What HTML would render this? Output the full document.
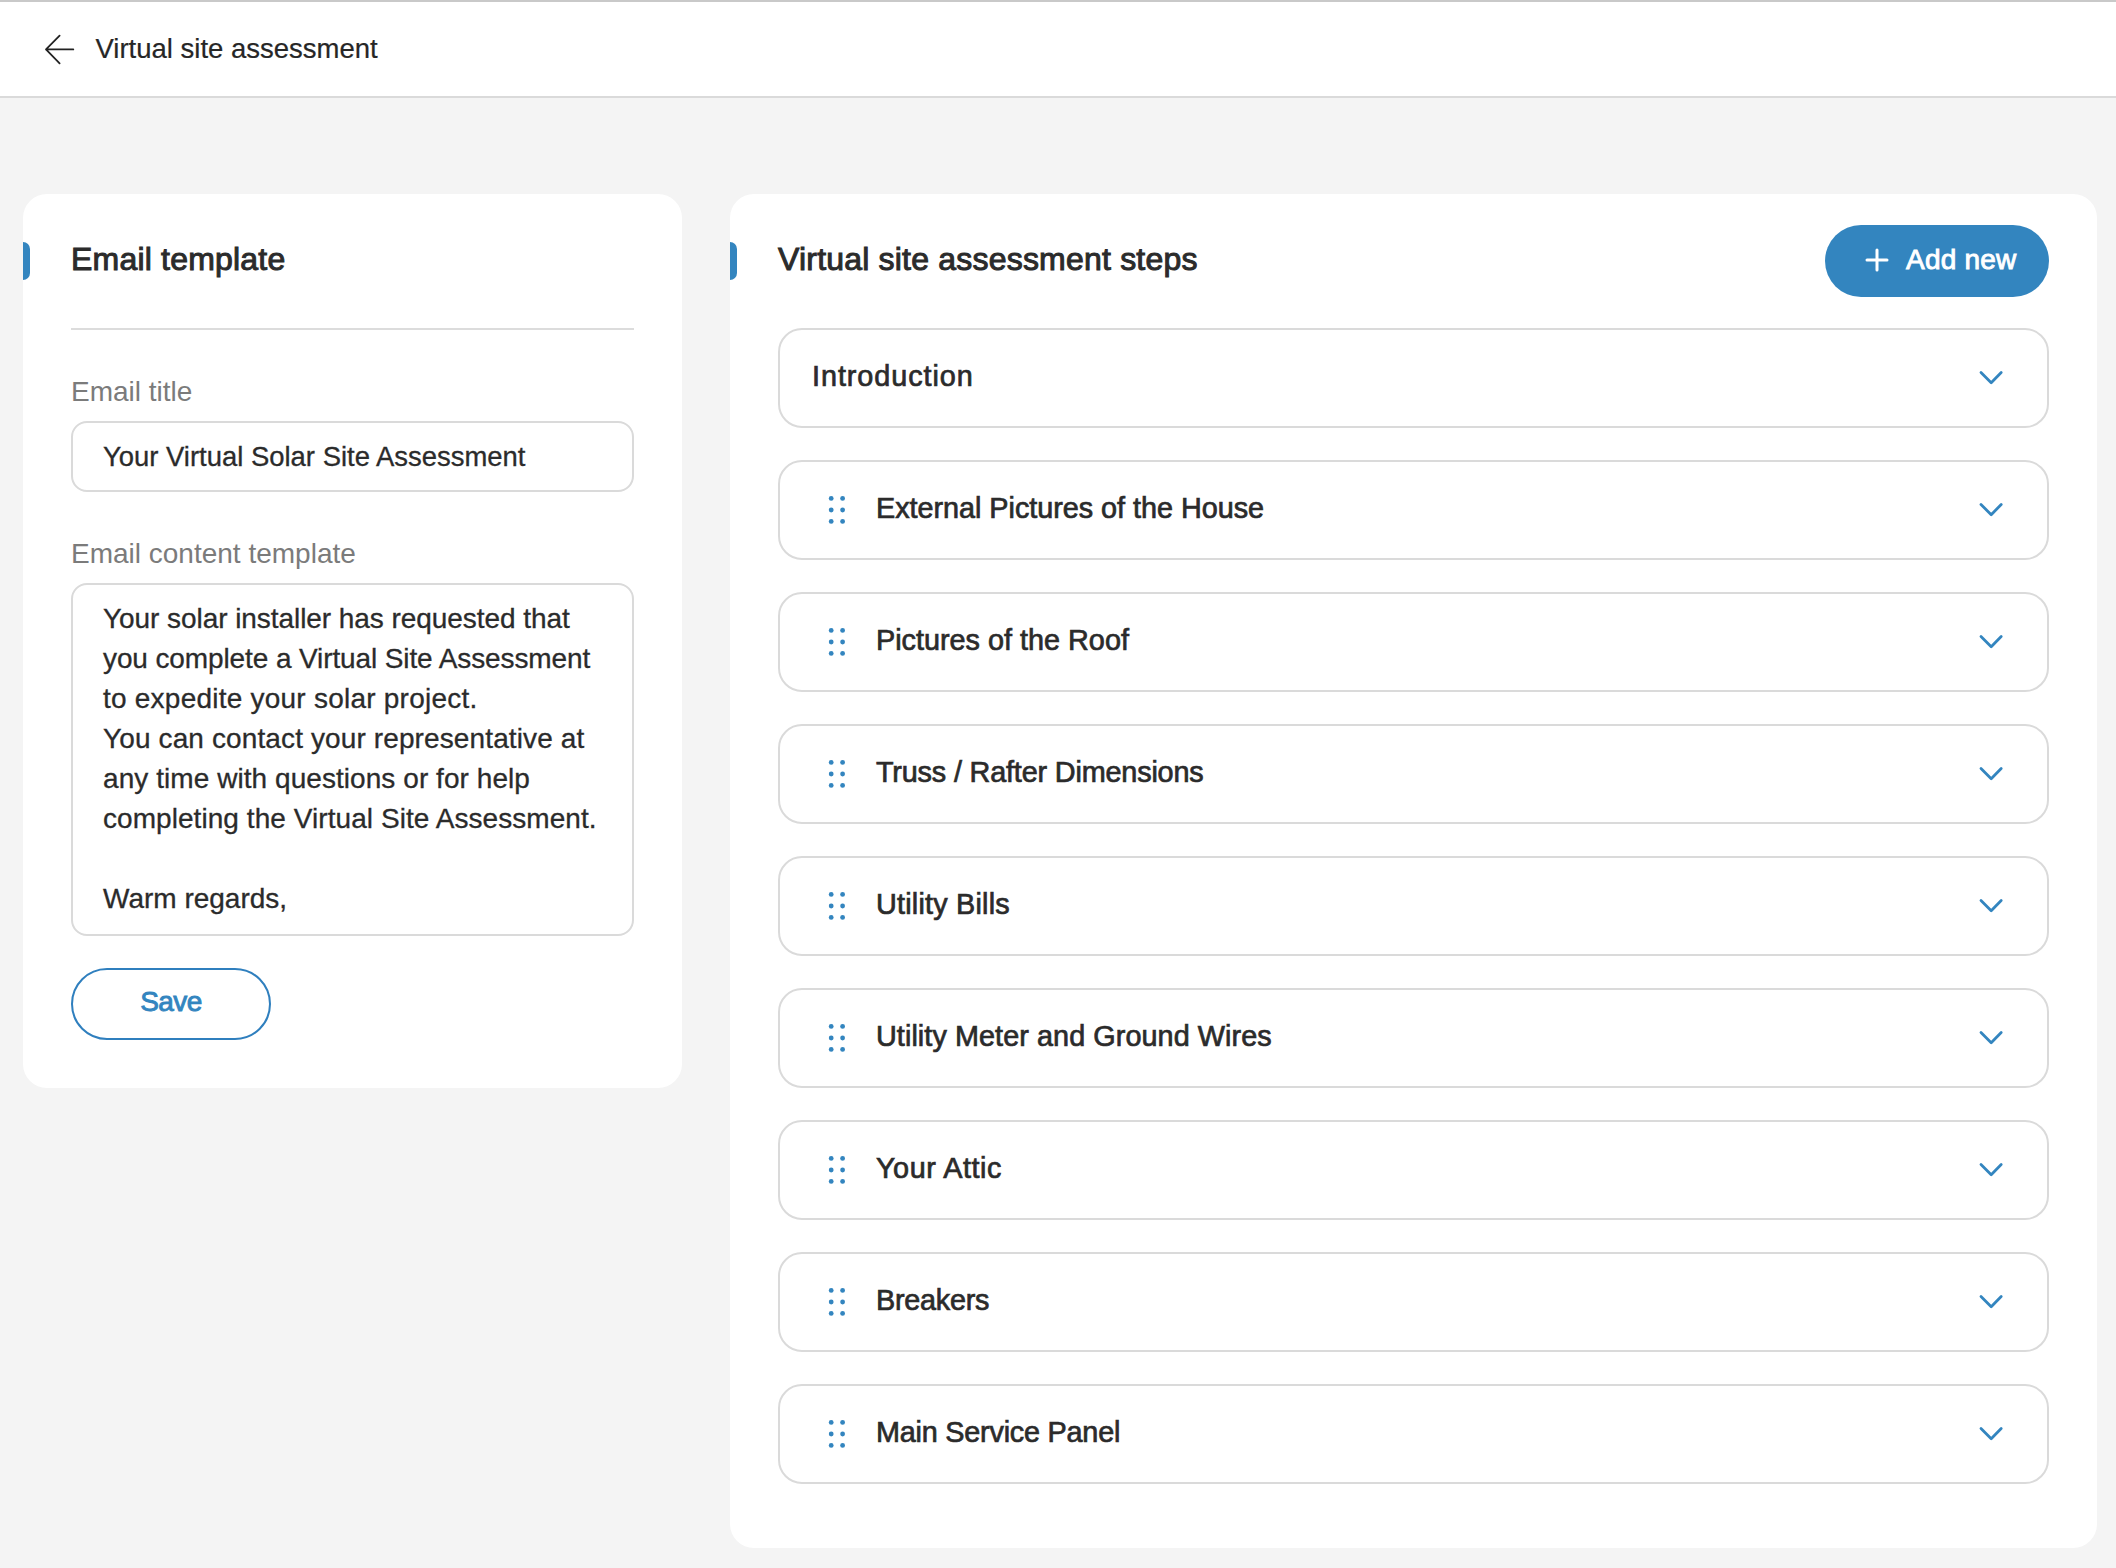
<!DOCTYPE html>
<html>
<head>
<meta charset="utf-8">
<style>
*{box-sizing:border-box;margin:0;padding:0}
html,body{width:2116px;height:1568px;overflow:hidden}
body{background:#f4f4f4;font-family:"Liberation Sans",sans-serif;color:#2b2b2b;position:relative}
.abs{position:absolute}
.topline{left:0;top:0;width:2116px;height:2px;background:#c9c9c9}
.header{left:0;top:2px;width:2116px;height:94px;background:#fff}
.hline{left:0;top:96px;width:2116px;height:2px;background:#dadada}
.htitle{left:95.5px;top:32px;font-size:27.5px;-webkit-text-stroke:0.2px #262626;line-height:34px;white-space:nowrap;color:#262626}
.card{background:#fff;border-radius:24px}
.accent{width:7px;height:38px;background:#3385bf;border-radius:0 8px 8px 0}
.ctitle{font-size:32px;-webkit-text-stroke:1px #2b2b2b;letter-spacing:0.2px;line-height:36px;white-space:nowrap;color:#2b2b2b}
.sep{height:2px;background:#dcdcdc}
.label{font-size:28px;line-height:34px;color:#7b7b7b;white-space:nowrap}
.field{border:2px solid #dadada;border-radius:16px;background:#fff}
.ftext{font-size:28px;-webkit-text-stroke:0.3px #2b2b2b;line-height:40px;white-space:nowrap;color:#2b2b2b}
.btn-out{border:2px solid #2f7fbe;border-radius:40px;background:#fff}
.btn-text{font-size:28px;-webkit-text-stroke:0.9px currentColor;color:#3385bf;line-height:34px;white-space:nowrap}
.btn-fill{background:#3385bf;border-radius:40px}
.item{left:778px;width:1271px;height:100px;border:2px solid #dadada;border-radius:24px;background:#fff}
.iname{font-size:28.8px;letter-spacing:0px;-webkit-text-stroke:0.7px #2b2b2b;line-height:34px;white-space:nowrap;color:#2b2b2b}
</style>
</head>
<body>
<div class="abs topline"></div>
<div class="abs header"></div>
<div class="abs hline"></div>
<svg class="abs" style="left:0;top:0" width="100" height="96" viewBox="0 0 100 96">
  <path d="M73.3 49.4 H46 M59.6 35.6 L46 49.4 L59.6 63.3" fill="none" stroke="#222" stroke-width="1.8" stroke-linecap="round" stroke-linejoin="round"/>
</svg>
<div class="abs htitle">Virtual site assessment</div>

<!-- Left card -->
<div class="abs card" style="left:23px;top:194px;width:659px;height:894px"></div>
<div class="abs accent" style="left:23px;top:242px"></div>
<div class="abs ctitle" style="left:71px;top:241px">Email template</div>
<div class="abs sep" style="left:71px;top:328px;width:563px"></div>
<div class="abs label" style="left:71px;top:375px">Email title</div>
<div class="abs field" style="left:71px;top:421px;width:563px;height:71px"></div>
<div class="abs ftext" style="left:103px;top:437px;font-size:27.45px">Your Virtual Solar Site Assessment</div>
<div class="abs label" style="left:71px;top:537px">Email content template</div>
<div class="abs field" style="left:71px;top:583px;width:563px;height:353px"></div>
<div class="abs ftext" style="left:103px;top:599px"><span style="letter-spacing:-0.06px">Your solar installer has requested that</span><br><span style="letter-spacing:-0.11px">you complete a Virtual Site Assessment</span><br><span style="letter-spacing:0.23px">to expedite your solar project.</span><br><span style="letter-spacing:0.12px">You can contact your representative at</span><br><span style="letter-spacing:0.06px">any time with questions or for help</span><br><span style="letter-spacing:0.06px">completing the Virtual Site Assessment.</span><br><br>Warm regards,</div>
<div class="abs btn-out" style="left:71px;top:968px;width:200px;height:72px"></div>
<div class="abs btn-text" style="left:71px;top:985px;width:200px;text-align:center;letter-spacing:-0.6px">Save</div>

<!-- Right card -->
<div class="abs card" style="left:730px;top:194px;width:1367px;height:1354px"></div>
<div class="abs accent" style="left:730px;top:242px"></div>
<div class="abs ctitle" style="left:778px;top:241px">Virtual site assessment steps</div>
<div class="abs btn-fill" style="left:1825px;top:225px;width:224px;height:72px"></div>
<svg class="abs" style="left:1825px;top:225px" width="224" height="72" viewBox="0 0 224 72">
  <path d="M52 25 V45 M42 35 H62" stroke="#fff" stroke-width="3" stroke-linecap="round"/>
</svg>
<div class="abs btn-text" style="left:1906px;top:243px;color:#fff;letter-spacing:0.2px">Add new</div>

<!--ITEMS-->
<div class="abs item" style="top:328px"></div>
<div class="abs iname" style="left:812px;top:359px;letter-spacing:0.93px">Introduction</div>
<svg class="abs" style="left:1970px;top:358px" width="40" height="40" viewBox="0 0 40 40"><path d="M11 14.5 L21.2 24.7 L31.2 14.5" fill="none" stroke="#3385bf" stroke-width="2.8" stroke-linecap="round" stroke-linejoin="round"/></svg>
<div class="abs item" style="top:460px"></div>
<svg class="abs" style="left:820px;top:490px" width="30" height="40" viewBox="0 0 30 40"><circle cx="11.2" cy="8.4" r="2.4" fill="#3385bf"/><circle cx="11.2" cy="20" r="2.4" fill="#3385bf"/><circle cx="11.2" cy="31.4" r="2.4" fill="#3385bf"/><circle cx="22.6" cy="8.4" r="2.4" fill="#3385bf"/><circle cx="22.6" cy="20" r="2.4" fill="#3385bf"/><circle cx="22.6" cy="31.4" r="2.4" fill="#3385bf"/></svg>
<div class="abs iname" style="left:876px;top:491px;letter-spacing:-0.03px">External Pictures of the House</div>
<svg class="abs" style="left:1970px;top:490px" width="40" height="40" viewBox="0 0 40 40"><path d="M11 14.5 L21.2 24.7 L31.2 14.5" fill="none" stroke="#3385bf" stroke-width="2.8" stroke-linecap="round" stroke-linejoin="round"/></svg>
<div class="abs item" style="top:592px"></div>
<svg class="abs" style="left:820px;top:622px" width="30" height="40" viewBox="0 0 30 40"><circle cx="11.2" cy="8.4" r="2.4" fill="#3385bf"/><circle cx="11.2" cy="20" r="2.4" fill="#3385bf"/><circle cx="11.2" cy="31.4" r="2.4" fill="#3385bf"/><circle cx="22.6" cy="8.4" r="2.4" fill="#3385bf"/><circle cx="22.6" cy="20" r="2.4" fill="#3385bf"/><circle cx="22.6" cy="31.4" r="2.4" fill="#3385bf"/></svg>
<div class="abs iname" style="left:876px;top:623px;letter-spacing:0.0px">Pictures of the Roof</div>
<svg class="abs" style="left:1970px;top:622px" width="40" height="40" viewBox="0 0 40 40"><path d="M11 14.5 L21.2 24.7 L31.2 14.5" fill="none" stroke="#3385bf" stroke-width="2.8" stroke-linecap="round" stroke-linejoin="round"/></svg>
<div class="abs item" style="top:724px"></div>
<svg class="abs" style="left:820px;top:754px" width="30" height="40" viewBox="0 0 30 40"><circle cx="11.2" cy="8.4" r="2.4" fill="#3385bf"/><circle cx="11.2" cy="20" r="2.4" fill="#3385bf"/><circle cx="11.2" cy="31.4" r="2.4" fill="#3385bf"/><circle cx="22.6" cy="8.4" r="2.4" fill="#3385bf"/><circle cx="22.6" cy="20" r="2.4" fill="#3385bf"/><circle cx="22.6" cy="31.4" r="2.4" fill="#3385bf"/></svg>
<div class="abs iname" style="left:876px;top:755px;letter-spacing:-0.17px">Truss / Rafter Dimensions</div>
<svg class="abs" style="left:1970px;top:754px" width="40" height="40" viewBox="0 0 40 40"><path d="M11 14.5 L21.2 24.7 L31.2 14.5" fill="none" stroke="#3385bf" stroke-width="2.8" stroke-linecap="round" stroke-linejoin="round"/></svg>
<div class="abs item" style="top:856px"></div>
<svg class="abs" style="left:820px;top:886px" width="30" height="40" viewBox="0 0 30 40"><circle cx="11.2" cy="8.4" r="2.4" fill="#3385bf"/><circle cx="11.2" cy="20" r="2.4" fill="#3385bf"/><circle cx="11.2" cy="31.4" r="2.4" fill="#3385bf"/><circle cx="22.6" cy="8.4" r="2.4" fill="#3385bf"/><circle cx="22.6" cy="20" r="2.4" fill="#3385bf"/><circle cx="22.6" cy="31.4" r="2.4" fill="#3385bf"/></svg>
<div class="abs iname" style="left:876px;top:887px;letter-spacing:0.21px">Utility Bills</div>
<svg class="abs" style="left:1970px;top:886px" width="40" height="40" viewBox="0 0 40 40"><path d="M11 14.5 L21.2 24.7 L31.2 14.5" fill="none" stroke="#3385bf" stroke-width="2.8" stroke-linecap="round" stroke-linejoin="round"/></svg>
<div class="abs item" style="top:988px"></div>
<svg class="abs" style="left:820px;top:1018px" width="30" height="40" viewBox="0 0 30 40"><circle cx="11.2" cy="8.4" r="2.4" fill="#3385bf"/><circle cx="11.2" cy="20" r="2.4" fill="#3385bf"/><circle cx="11.2" cy="31.4" r="2.4" fill="#3385bf"/><circle cx="22.6" cy="8.4" r="2.4" fill="#3385bf"/><circle cx="22.6" cy="20" r="2.4" fill="#3385bf"/><circle cx="22.6" cy="31.4" r="2.4" fill="#3385bf"/></svg>
<div class="abs iname" style="left:876px;top:1019px;letter-spacing:0.07px">Utility Meter and Ground Wires</div>
<svg class="abs" style="left:1970px;top:1018px" width="40" height="40" viewBox="0 0 40 40"><path d="M11 14.5 L21.2 24.7 L31.2 14.5" fill="none" stroke="#3385bf" stroke-width="2.8" stroke-linecap="round" stroke-linejoin="round"/></svg>
<div class="abs item" style="top:1120px"></div>
<svg class="abs" style="left:820px;top:1150px" width="30" height="40" viewBox="0 0 30 40"><circle cx="11.2" cy="8.4" r="2.4" fill="#3385bf"/><circle cx="11.2" cy="20" r="2.4" fill="#3385bf"/><circle cx="11.2" cy="31.4" r="2.4" fill="#3385bf"/><circle cx="22.6" cy="8.4" r="2.4" fill="#3385bf"/><circle cx="22.6" cy="20" r="2.4" fill="#3385bf"/><circle cx="22.6" cy="31.4" r="2.4" fill="#3385bf"/></svg>
<div class="abs iname" style="left:876px;top:1151px;letter-spacing:0.53px">Your Attic</div>
<svg class="abs" style="left:1970px;top:1150px" width="40" height="40" viewBox="0 0 40 40"><path d="M11 14.5 L21.2 24.7 L31.2 14.5" fill="none" stroke="#3385bf" stroke-width="2.8" stroke-linecap="round" stroke-linejoin="round"/></svg>
<div class="abs item" style="top:1252px"></div>
<svg class="abs" style="left:820px;top:1282px" width="30" height="40" viewBox="0 0 30 40"><circle cx="11.2" cy="8.4" r="2.4" fill="#3385bf"/><circle cx="11.2" cy="20" r="2.4" fill="#3385bf"/><circle cx="11.2" cy="31.4" r="2.4" fill="#3385bf"/><circle cx="22.6" cy="8.4" r="2.4" fill="#3385bf"/><circle cx="22.6" cy="20" r="2.4" fill="#3385bf"/><circle cx="22.6" cy="31.4" r="2.4" fill="#3385bf"/></svg>
<div class="abs iname" style="left:876px;top:1283px;letter-spacing:-0.26px">Breakers</div>
<svg class="abs" style="left:1970px;top:1282px" width="40" height="40" viewBox="0 0 40 40"><path d="M11 14.5 L21.2 24.7 L31.2 14.5" fill="none" stroke="#3385bf" stroke-width="2.8" stroke-linecap="round" stroke-linejoin="round"/></svg>
<div class="abs item" style="top:1384px"></div>
<svg class="abs" style="left:820px;top:1414px" width="30" height="40" viewBox="0 0 30 40"><circle cx="11.2" cy="8.4" r="2.4" fill="#3385bf"/><circle cx="11.2" cy="20" r="2.4" fill="#3385bf"/><circle cx="11.2" cy="31.4" r="2.4" fill="#3385bf"/><circle cx="22.6" cy="8.4" r="2.4" fill="#3385bf"/><circle cx="22.6" cy="20" r="2.4" fill="#3385bf"/><circle cx="22.6" cy="31.4" r="2.4" fill="#3385bf"/></svg>
<div class="abs iname" style="left:876px;top:1415px;letter-spacing:-0.22px">Main Service Panel</div>
<svg class="abs" style="left:1970px;top:1414px" width="40" height="40" viewBox="0 0 40 40"><path d="M11 14.5 L21.2 24.7 L31.2 14.5" fill="none" stroke="#3385bf" stroke-width="2.8" stroke-linecap="round" stroke-linejoin="round"/></svg>
<!--/ITEMS-->
</body>
</html>
